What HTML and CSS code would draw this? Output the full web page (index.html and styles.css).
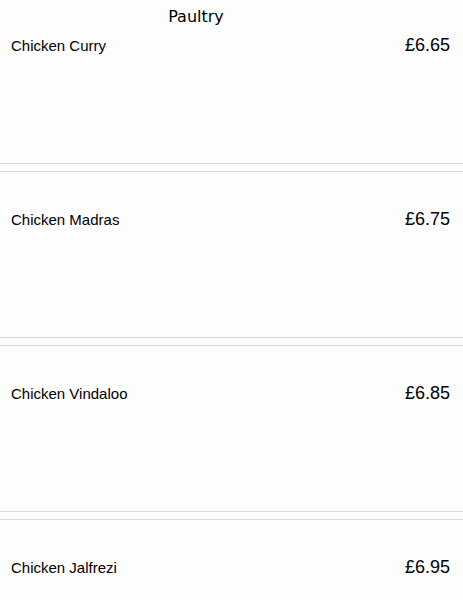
FILE: index.html
```html
<!DOCTYPE html>
<html lang="en">
<head>
    <meta charset="UTF-8">
    <meta name="viewport" content="width=device-width, initial-scale=1.0">
    <title>Paultry</title>
    <link rel="stylesheet" href="styles.css">
</head>
<body>
    <div class="menu">
        <h2 class="menu-title">Paultry</h2>
        <div class="item">
            <div class="item-row">
                <span class="item-name">Chicken Curry</span>
                <span class="item-price">£6.65</span>
            </div>
        </div>
        <div class="item">
            <div class="item-row">
                <span class="item-name">Chicken Madras</span>
                <span class="item-price">£6.75</span>
            </div>
        </div>
        <div class="item">
            <div class="item-row">
                <span class="item-name">Chicken Vindaloo</span>
                <span class="item-price">£6.85</span>
            </div>
        </div>
        <div class="item">
            <div class="item-row">
                <span class="item-name">Chicken Jalfrezi</span>
                <span class="item-price">£6.95</span>
            </div>
        </div>
    </div>
</body>
</html>
```
FILE: styles.css
```css
body {
    font-family: "Liberation Sans", Arial, sans-serif;
    background-color: #fdfdfd;
    color: #000;
    margin: 0;
    padding: 0;
}

.menu {
    width: 100%;
}

.menu-title {
    font-family: "DejaVu Sans", Verdana, sans-serif;
    font-size: 16px;
    font-weight: normal;
    line-height: 20px;
    width: 392px;
    text-align: center;
    margin: 0;
    padding: 7px 0 5px;
}

.item {
    box-sizing: border-box;
    height: 167px;
    padding-top: 36px;
    border-top: 1px solid #d8d8d8;
    border-bottom: 1px solid #d8d8d8;
    margin-bottom: 7px;
}

/* first card sits right under the title */
.item:first-of-type {
    border-top: none;
    height: 132px;
    padding-top: 2px;
}

.item-row {
    display: flex;
    justify-content: space-between;
    align-items: center;
    height: 22px;
    padding: 0 13px 0 11px;
}

.item-name {
    font-size: 15px;
}

.item-price {
    font-size: 18px;
}
```
